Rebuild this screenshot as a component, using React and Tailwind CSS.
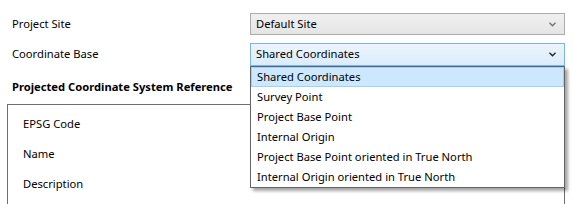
import React from 'react';

function Chevron({ className }) {
  return (
    <svg width="7" height="5" viewBox="0 0 7 5" className={className}>
      <path d="M0.5 0.8 L3.5 3.8 L6.5 0.8" fill="none" stroke="currentColor" strokeWidth="1.3" />
    </svg>
  );
}

const options = [
  'Shared Coordinates',
  'Survey Point',
  'Project Base Point',
  'Internal Origin',
  'Project Base Point oriented in True North',
  'Internal Origin oriented in True North',
];

export default function App() {
  return (
    <div className="relative w-[574px] h-[204px] overflow-hidden bg-white text-[11.2px] text-black font-['Segoe_UI','Noto_Sans',sans-serif]">
      <div className="pl-[7px] pr-[9px] pt-[13px]">
        <div className="flex items-center h-[22px]">
          <div className="w-[243px] pl-[5px]">Project Site</div>
          <div className="flex-1 h-full flex items-center justify-between pl-[5px] pr-[8px] border border-[#acacac] bg-gradient-to-b from-[#f0f0f0] to-[#e5e5e5]">
            <span>Default Site</span>
            <Chevron className="text-[#707070]" />
          </div>
        </div>
        <div className="flex items-center h-[23px] mt-[8px]">
          <div className="w-[243px] pl-[5px]">Coordinate Base</div>
          <div className="flex-1 h-full flex items-center justify-between pl-[5px] pr-[8px] border border-[#7eb4ea] bg-gradient-to-b from-[#ecf4fc] to-[#dcecfc]">
            <span>Shared Coordinates</span>
            <Chevron className="text-[#202020]" />
          </div>
        </div>
        <div className="h-[38px] pt-[4px] flex items-center pl-[5px] font-bold">
          Projected Coordinate System Reference
        </div>
        <div className="h-[120px] border border-[#6e6e6e] pl-[15px] pt-[4px]">
          <div className="h-[30px] flex items-center">EPSG Code</div>
          <div className="h-[30px] flex items-center">Name</div>
          <div className="h-[30px] flex items-center">Description</div>
        </div>
      </div>

      <div className="absolute left-[250px] top-[66px] w-[315px] border border-[#646464] bg-white shadow-[3px_3px_3px_rgba(0,0,0,0.35)]">
        {options.map((o, i) => (
          <div
            key={o}
            className={`h-[20px] flex items-center pl-[5px] border ${
              i === 0 ? 'bg-[#cce8ff] border-[#99d1ff]' : 'border-transparent'
            }`}
          >
            {o}
          </div>
        ))}
      </div>
    </div>
  );
}
